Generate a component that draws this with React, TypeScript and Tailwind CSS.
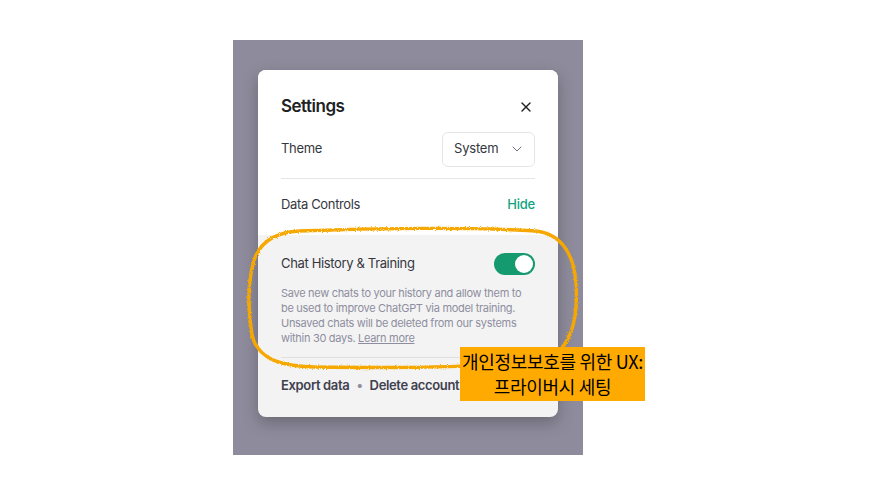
import React from "react";
import { X, ChevronDown } from "lucide-react";

const font = { fontFamily: "Inter, 'Noto Sans', sans-serif" };

function Toggle() {
  return (
    <div className="flex h-[22px] w-[41px] items-center justify-end rounded-full bg-[#15996f] px-[2px]">
      <div className="h-[18px] w-[18px] rounded-full bg-white" />
    </div>
  );
}

function Scribble() {
  // hand-drawn highlight loop, drawn over the card
  return (
    <svg
      className="pointer-events-none absolute left-[244px] top-[225px]"
      width="340"
      height="150"
      viewBox="0 0 340 150"
    >
      <defs>
        <filter id="rough">
          <feTurbulence type="fractalNoise" baseFrequency="0.9" numOctaves="2" result="n" />
          <feDisplacementMap in="SourceGraphic" in2="n" scale="3" />
        </filter>
      </defs>
      <path
        d="M55 6 C130 3 230 2 292 6 C318 9 330 30 332 58 C334 88 330 116 310 130 C270 144 150 143 70 142 C40 141 14 136 8 110 C3 80 4 50 12 30 C20 14 34 7 55 6 Z"
        fill="none"
        stroke="#f7a800"
        strokeWidth="3.4"
        filter="url(#rough)"
      />
    </svg>
  );
}

export default function App() {
  return (
    <div className="relative h-[491px] w-[883px] bg-white" style={font}>
      <div className="pl-[233px] pt-[40px]">
        <div className="h-[415px] w-[350px] bg-[#8e8c9c] pl-[25px] pt-[30px]">
          <div className="w-[300px] overflow-hidden rounded-lg bg-[#f3f3f3] shadow-[0_6px_16px_rgba(0,0,0,0.25)]">
            <div className="bg-white px-[23px] pb-[21px] pt-[24px]">
              <div className="flex items-center justify-between">
                <span className="text-[17px] font-semibold tracking-[-0.5px] text-[#202123]">Settings</span>
                <X size={16} strokeWidth={2} className="mr-[1px] text-[#202123]" />
              </div>
              <div className="mt-[12px] flex items-center justify-between border-b border-[#e5e5e5] pb-[11px]">
                <span className="text-[13px] tracking-[-0.3px] text-[#353740]">Theme</span>
                <div className="flex h-[35px] w-[93px] items-center justify-between rounded-md border border-[#e5e5e5] pl-[11px] pr-[9px]">
                  <span className="text-[13px] tracking-[-0.2px] text-[#353740]">System</span>
                  <ChevronDown size={16} strokeWidth={1.5} className="text-[#6e6e80]" />
                </div>
              </div>
              <div className="mt-[16px] flex items-center justify-between">
                <span className="text-[13px] tracking-[-0.35px] text-[#353740]">Data Controls</span>
                <span className="text-[13px] font-medium tracking-[-0.2px] text-[#10a37f]">Hide</span>
              </div>
            </div>
            <div className="px-[23px] pt-[18px]">
              <div className="flex items-center justify-between">
                <span className="text-[13px] tracking-[-0.35px] text-[#353740]">Chat History &amp; Training</span>
                <Toggle />
              </div>
              <p className="mt-[11px] border-b border-[#e0e0e0] pb-[11px] text-[11px] leading-[15px] tracking-[-0.3px] text-[#8e8ea0]">
                Save new chats to your history and allow them to be used to improve ChatGPT via model training. Unsaved chats will be deleted from our systems within 30 days.{" "}
                <span className="underline">Learn more</span>
              </p>
              <div className="flex items-center gap-[7px] pb-[21px] pt-[18px] text-[13px] font-semibold tracking-[-0.35px] text-[#40414f]">
                <span>Export data</span>
                <span className="text-[#8e8ea0]">•</span>
                <span>Delete account</span>
              </div>
            </div>
          </div>
        </div>
      </div>
      <Scribble />
      <div
        className="absolute left-[460px] top-[347px] flex h-[54px] w-[185px] flex-col items-center justify-center bg-[#ffaa00] text-[18px] font-normal leading-[25px] tracking-[-0.3px] text-black"
        style={{ fontFamily: "'Noto Sans CJK KR', 'Noto Sans', sans-serif" }}
      >
        <span>개인정보보호를 위한 UX:</span>
        <span>프라이버시 세팅</span>
      </div>
    </div>
  );
}
